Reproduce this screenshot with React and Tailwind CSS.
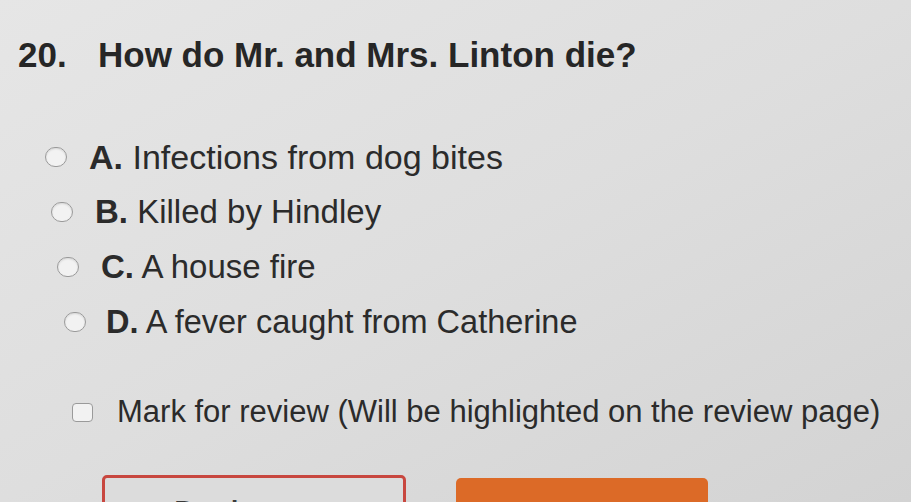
import React from "react";

const options = [
  { key: "A", text: "Infections from dog bites", row: "ml-[45px] gap-[22px] text-[34px]" },
  { key: "B", text: "Killed by Hindley", row: "ml-[51px] gap-[22px] text-[33px]" },
  { key: "C", text: "A house fire", row: "ml-[57px] gap-[22px] text-[33px]" },
  { key: "D", text: "A fever caught from Catherine", row: "ml-[64px] gap-[20px] text-[32.5px]" },
];

function Radio() {
  return (
    <span className="block h-[20px] w-[22px] shrink-0 rounded-full border-[1.5px] border-[#9a9a9a] bg-[#f2f2f2] shadow-[inset_0_1px_2px_rgba(0,0,0,0.12)]" />
  );
}

export default function App() {
  return (
    <div
      className="h-[502px] w-[911px] overflow-hidden bg-gradient-to-br from-[#e6e6e6] via-[#dedede] to-[#d3d3d3] text-[#2b2b2b]"
      style={{ fontFamily: '"Liberation Sans", Arial, sans-serif' }}
    >
      <h1 className="flex pt-[35px] pl-[18px] text-[35px] font-bold leading-[40px] text-[#262626]">
        <span className="w-[80px]">20.</span>
        <span>How do Mr. and Mrs. Linton die?</span>
      </h1>

      <ul className="mt-[62px] flex flex-col gap-[15px]">
        {options.map((o) => (
          <li key={o.key} className={`flex h-[40px] items-center leading-[40px] ${o.row}`}>
            <Radio />
            <span>
              <b className="font-bold">{o.key}.</b> {o.text}
            </span>
          </li>
        ))}
      </ul>

      <label className="mt-[50px] ml-[72px] flex h-[40px] items-center gap-[24px] text-[31px] leading-[40px]">
        <span className="block h-[19px] w-[21px] shrink-0 rounded-[4px] border-[1.5px] border-[#9a9a9a] bg-[#f2f2f2]" />
        <span>Mark for review (Will be highlighted on the review page)</span>
      </label>

      <div className="mt-[43px] flex items-start">
        <button className="ml-[102px] h-[60px] w-[304px] rounded-[5px] border-[3px] border-[#c8473f] bg-[#dcdcdc] pl-[32px] pt-[17px] text-left text-[26px] font-bold leading-[30px] text-[#3a3a3a]">
          &lt;&lt; Previous Question
        </button>
        <button className="mt-[3px] ml-[50px] h-[60px] w-[252px] rounded-[5px] bg-[#dc6a27] pl-[26px] pt-[17px] text-left text-[26px] font-bold leading-[30px] text-white">
          Next Question
        </button>
      </div>
    </div>
  );
}
